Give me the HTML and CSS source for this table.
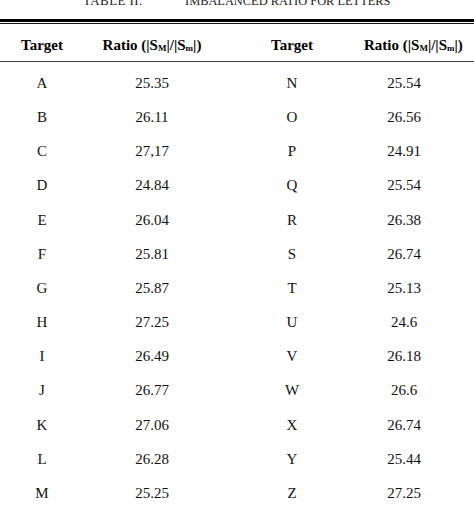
FILE: index.html
```html
<!DOCTYPE html>
<html>
<head>
<meta charset="utf-8">
<link rel="stylesheet" href="styles.css">
</head>
<body>
<div class="page">
  <div class="caption"><span class="cap-num">TABLE II.</span><span class="cap-title">IMBALANCED RATIO FOR LETTERS</span></div>
  <div class="table">
    <div class="head">
      <div class="row hrow">
        <div>Target</div>
        <div>Ratio (|S<span class="sub">M</span>|/|S<span class="sub">m</span>|)</div>
        <div>Target</div>
        <div>Ratio (|S<span class="sub">M</span>|/|S<span class="sub">m</span>|)</div>
      </div>
    </div>
    <div class="body">
      <div class="row"><div>A</div><div>25.35</div><div>N</div><div>25.54</div></div>
      <div class="row"><div>B</div><div>26.11</div><div>O</div><div>26.56</div></div>
      <div class="row"><div>C</div><div>27,17</div><div>P</div><div>24.91</div></div>
      <div class="row"><div>D</div><div>24.84</div><div>Q</div><div>25.54</div></div>
      <div class="row"><div>E</div><div>26.04</div><div>R</div><div>26.38</div></div>
      <div class="row"><div>F</div><div>25.81</div><div>S</div><div>26.74</div></div>
      <div class="row"><div>G</div><div>25.87</div><div>T</div><div>25.13</div></div>
      <div class="row"><div>H</div><div>27.25</div><div>U</div><div>24.6</div></div>
      <div class="row"><div>I</div><div>26.49</div><div>V</div><div>26.18</div></div>
      <div class="row"><div>J</div><div>26.77</div><div>W</div><div>26.6</div></div>
      <div class="row"><div>K</div><div>27.06</div><div>X</div><div>26.74</div></div>
      <div class="row"><div>L</div><div>26.28</div><div>Y</div><div>25.44</div></div>
      <div class="row"><div>M</div><div>25.25</div><div>Z</div><div>27.25</div></div>
    </div>
  </div>
</div>
</body>
</html>
```

FILE: styles.css
```css
html, body {
  margin: 0;
  padding: 0;
  background: #fff;
}
body {
  font-family: "Liberation Serif", "Times New Roman", serif;
  color: #111;
  width: 474px;
  height: 507px;
  overflow: hidden;
}
.page {
  width: 474px;
}
.caption {
  display: flex;
  align-items: baseline;
  margin-top: -6px;
  height: 13px;
  line-height: 13px;
  font-size: 13px;
  padding-left: 83px;
  margin-bottom: 12px;
  color: #222;
}
.cap-num {
  letter-spacing: 0.4px;
  width: 102px;
}
.cap-title {
  font-size: 12.4px;
}
.table {
  border-top: 3px solid #000;
  padding-top: 1px;
}
.head {
  border-top: 1px solid #111;
  border-bottom: 1px solid #444;
}
.row {
  display: grid;
  grid-template-columns: 84px 136px 144px 80px 1fr;
  text-align: center;
  font-size: 15px;
  height: 34.17px;
  line-height: 34.17px;
  white-space: nowrap;
}
.hrow {
  font-weight: bold;
  padding-top: 6px;
  height: 31px;
  line-height: 31px;
  color: #000;
}
.sub {
  font-size: 9px;
  vertical-align: -1px;
  line-height: 0;
}
.body {
  padding-top: 4px;
}
```
